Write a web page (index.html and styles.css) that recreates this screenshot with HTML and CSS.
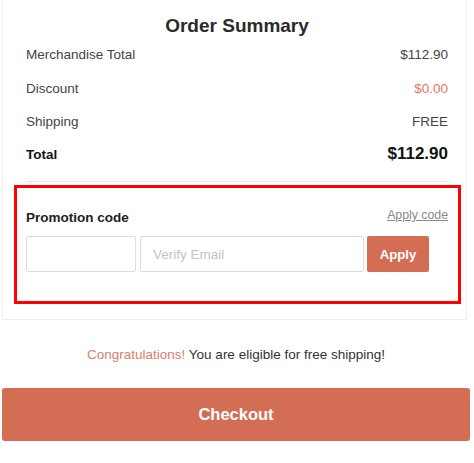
FILE: index.html
```html
<!DOCTYPE html>
<html lang="en">
<head>
  <meta charset="UTF-8">
  <meta name="viewport" content="width=device-width, initial-scale=1.0">
  <title>Order Summary</title>
  <link rel="stylesheet" href="styles.css">
</head>
<body>

  <div class="page">
    <!-- Resumo do pedido -->
    <div class="summary-card">
      <h2>Order Summary</h2>

      <div class="summary-rows">
        <div class="summary-row">
          <span>Merchandise Total</span>
          <span>$112.90</span>
        </div>
        <div class="summary-row">
          <span>Discount</span>
          <span class="discount">$0.00</span>
        </div>
        <div class="summary-row">
          <span>Shipping</span>
          <span>FREE</span>
        </div>
        <div class="summary-row total-row">
          <span class="total-label">Total</span>
          <span class="total-value">$112.90</span>
        </div>
      </div>

      <!-- Código promocional -->
      <div class="promo-box">
        <div class="promo-head">
          <span class="promo-title">Promotion code</span>
          <a href="#" class="promo-link">Apply code</a>
        </div>
        <form class="promo-form" id="promoForm">
          <input type="text" class="promo-code" name="promoCode">
          <input type="email" class="promo-email" name="promoEmail" placeholder="Verify Email">
          <button type="submit" class="apply-btn">Apply</button>
        </form>
      </div>
    </div>

    <p class="shipping-note"><span class="congrats">Congratulations!</span> You are eligible for free shipping!</p>

    <button type="button" class="checkout-btn">Checkout</button>
  </div>

  <script>
    document.getElementById('promoForm').addEventListener('submit', function(event) {
      event.preventDefault();
    });
  </script>

</body>
</html>
```

FILE: styles.css
```css
* {
  margin: 0;
  padding: 0;
  box-sizing: border-box;
  font-family: 'Liberation Sans', Arial, sans-serif;
}

body {
  background-color: #fff;
  color: #444;
  font-size: 13.5px;
}

.page {
  padding: 0 4px 0 2px;
}

.summary-card {
  margin-right: 3px;
  padding: 14px 18px 15px 23px;
  border: 1px solid #eee;
  border-top: none;
}

.summary-card h2 {
  font-size: 19px;
  line-height: 24px;
  font-weight: bold;
  color: #2a2a2a;
  text-align: center;
}

.summary-rows {
  padding-bottom: 18px;
  border-bottom: 1px solid #e4e4e4;
}

.summary-row {
  display: flex;
  justify-content: space-between;
  align-items: baseline;
  padding: 8px 0 8.5px;
  line-height: 17px;
}

.summary-row.total-row {
  padding-top: 6.5px;
  padding-bottom: 0;
}

.discount {
  color: #e0786a;
}

.total-label {
  font-weight: bold;
  color: #111;
}

.total-value {
  font-size: 17px;
  font-weight: bold;
  color: #111;
}

.promo-box {
  margin: 3px -13px 0 -12px;
  padding: 19px 10px 29px 9px;
  border: 3px solid #f00;
}

.promo-head {
  display: flex;
  justify-content: space-between;
  align-items: center;
  line-height: 17px;
}

.promo-title {
  font-weight: bold;
  color: #222;
}

.promo-link {
  padding-bottom: 4px;
  font-size: 12.3px;
  color: #8a8a8a;
  text-decoration: underline;
}

.promo-form {
  display: flex;
  margin-top: 8px;
}

.promo-form input {
  height: 36px;
  padding: 0 12px;
  font-size: 13.5px;
  color: #444;
  border: 1px solid #dcdcdc;
  border-radius: 2px;
  outline: none;
}

.promo-form input::placeholder {
  color: #c4c4c4;
}

.promo-code {
  width: 110px;
}

.promo-email {
  width: 224px;
  margin-left: 4px;
}

.apply-btn {
  width: 62px;
  height: 36px;
  margin-left: 3px;
  font-size: 13.2px;
  font-weight: bold;
  color: #fff;
  background-color: #d36e54;
  border: none;
  border-radius: 2px;
  cursor: pointer;
}

.shipping-note {
  margin: 26px 0 25px;
  line-height: 17px;
  text-align: center;
  color: #333;
}

.congrats {
  color: #d7806c;
}

.checkout-btn {
  display: block;
  width: 100%;
  height: 53px;
  font-size: 16.5px;
  font-weight: bold;
  color: #fff;
  background-color: #d36d53;
  border: none;
  border-radius: 3px;
  cursor: pointer;
}
```
